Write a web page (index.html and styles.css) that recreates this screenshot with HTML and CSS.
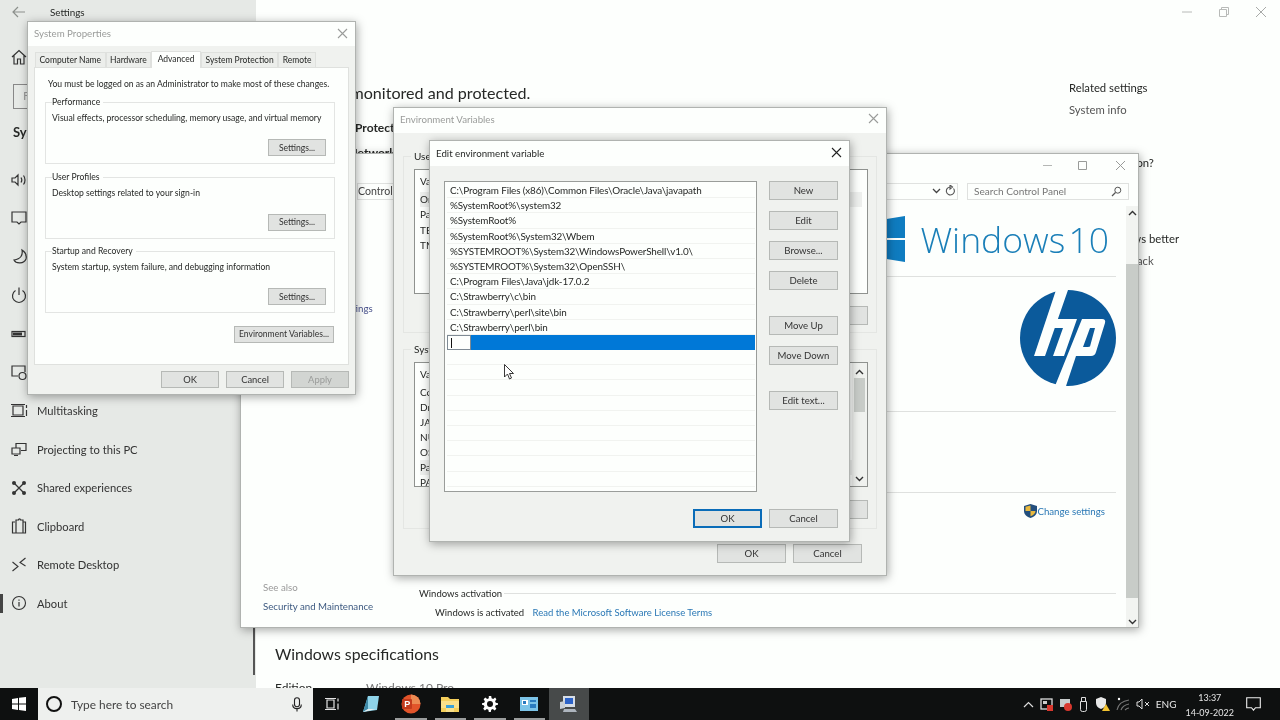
FILE: index.html
```html
<!DOCTYPE html>
<html lang="en">
<head>
  <meta charset="UTF-8">
  <title>Edit environment variable</title>
  <link rel="stylesheet" href="styles.css">
</head>
<body>
<div class="screen">

  <!-- settings app behind everything -->
  <div class="settings">
    <div class="sidebar">
      <div class="side-head">
        <svg class="back" width="14" height="12" viewBox="0 0 14 12"><path d="M6 1 1 6l5 5M1 6h12" fill="none" stroke="#8c908c" stroke-width="1.2"/></svg>
        <span>Settings</span>
      </div>
      <div class="nav-item home">
        <svg class="ico" viewBox="0 0 18 18"><path d="M2 9 9 2.500 16 9M4 7.500V16h3.500v-5h3v5H14V7.500" fill="none" stroke="#333" stroke-width="1.2"/></svg>
      </div>
      <div class="find">F</div>
      <div class="side-title">System</div>
      <div class="nav-list">
        <div class="nav-item"><svg class="ico" viewBox="0 0 18 18"><path d="M2 7h3l3-3v10l-3-3H2zM11 6.500c1 1.500 1 3.500 0 5M13.500 4.500c2 2.500 2 6.500 0 9" fill="none" stroke="#333" stroke-width="1.2"/></svg>Sound</div>
        <div class="nav-item"><svg class="ico" viewBox="0 0 18 18"><path d="M2 3h14v10h-5l-2 2-2-2H2z" fill="none" stroke="#333" stroke-width="1.2"/></svg>Notifications</div>
        <div class="nav-item"><svg class="ico" viewBox="0 0 18 18"><path d="M12 2c1 5-1 9-8 10 2 4 10 4 12-1 1-4-1-7-4-9z" fill="none" stroke="#333" stroke-width="1.2"/></svg>Focus assist</div>
        <div class="nav-item"><svg class="ico" viewBox="0 0 18 18"><path d="M5.500 4.500a6.500 6.500 0 1 0 7 0M9 1.500V9" fill="none" stroke="#333" stroke-width="1.2"/></svg>Power</div>
        <div class="nav-item"><svg class="ico" viewBox="0 0 18 18"><rect x="2" y="6.500" width="13" height="5" fill="none" stroke="#333" stroke-width="1.2"/><rect x="3" y="7.500" width="9" height="3" fill="#333"/></svg>Battery</div>
        <div class="nav-item"><svg class="ico" viewBox="0 0 18 18"><path d="M8 13H2V3h13v6" fill="none" stroke="#333" stroke-width="1.2"/><circle cx="12.500" cy="13" r="3.500" fill="none" stroke="#333" stroke-width="1.200"/></svg>Tablet</div>
        <div class="nav-item"><svg class="ico" viewBox="0 0 18 18"><path d="M3 4h10v9H3zM1 2.500h14M1 14.500h14M16.500 3v3M16.500 8v6" fill="none" stroke="#333" stroke-width="1.2"/></svg>Multitasking</div>
        <div class="nav-item"><svg class="ico" viewBox="0 0 18 18"><path d="M6 8V3.500h10v7h-5M2 8h8v6H2zM4 15.500h4" fill="none" stroke="#333" stroke-width="1.2"/></svg>Projecting to this PC</div>
        <div class="nav-item"><svg class="ico" viewBox="0 0 18 18"><path d="M5 5l8 8M13 5l-8 8" stroke="#333" stroke-width="1.3"/><circle cx="4" cy="4" r="2" fill="#333"/><circle cx="14" cy="4" r="2" fill="#333"/><circle cx="4" cy="14" r="2" fill="#333"/><circle cx="14" cy="14" r="2" fill="#333"/></svg>Shared experiences</div>
        <div class="nav-item"><svg class="ico" viewBox="0 0 18 18"><path d="M5 5H2.500v11h13V5H13M6 16V3h2.500c0-1.500 2-1.500 2 0H13v13" fill="none" stroke="#333" stroke-width="1.2"/></svg>Clipboard</div>
        <div class="nav-item"><svg class="ico" viewBox="0 0 18 18"><path d="M2.500 6 8 10.500 2.500 15M15.500 2 10 6.500 15.500 10" fill="none" stroke="#333" stroke-width="1.100"/></svg>Remote Desktop</div>
        <div class="nav-item current"><svg class="ico" viewBox="0 0 18 18"><circle cx="9" cy="9" r="6.500" fill="none" stroke="#333" stroke-width="1.100"/><path d="M9 8v4.500M9 5.500v1.200" stroke="#333" stroke-width="1.200"/></svg>About</div>
      </div>
      <div class="side-scroll"></div>
    </div>

    <div class="content">
      <p class="status">Your PC is monitored and protected.</p>
      <p class="feature">Virus &amp; Threat Protection</p>
      <p class="feature network">Firewall and Network</p>
      <h2 class="specs">Windows specifications</h2>
      <div class="spec-row"><span class="spec-key">Edition</span><span class="spec-val">Windows 10 Pro</span></div>
    </div>

    <div class="related">
      <p class="rel-head">Related settings</p>
      <p class="rel-link">System info</p>
      <p class="rel-head rel-q">Have a question?</p>
      <p class="rel-head rel-better">Make Windows better</p>
      <p class="rel-link rel-give">Give us feedback</p>
    </div>
    <div class="app-controls">
      <svg width="10" height="10" viewBox="0 0 10 10"><path d="M0 5h10" stroke="#b8bab8"/></svg>
      <svg width="10" height="10" viewBox="0 0 10 10"><path d="M.5 2.500h7v7h-7zM2.500 2.500v-2h7v7h-2" fill="none" stroke="#b8bab8"/></svg>
      <svg width="10" height="10" viewBox="0 0 10 10"><path d="m0 0 10 10M10 0 0 10" stroke="#a8aaa8"/></svg>
    </div>
  </div>

  <!-- control panel: system -->
  <div class="window control-panel">
    <div class="cp-head">
      <svg width="11" height="11" viewBox="0 0 11 11"><path d="M1 5.500h9" stroke="#b5b7b5"/></svg>
      <svg width="11" height="11" viewBox="0 0 11 11"><path d="M1.500 1.500h8v8h-8z" fill="none" stroke="#999b99"/></svg>
      <svg width="11" height="11" viewBox="0 0 11 11"><path d="m1 1 9 9M10 1l-9 9" stroke="#999b99"/></svg>
    </div>
    <div class="cp-address">
      <div class="address">
        <span class="crumb">Control Panel</span>
        <svg class="addr-chev" width="9" height="6" viewBox="0 0 9 6"><path d="m1 1 3.500 3.500L8 1" fill="none" stroke="#444" stroke-width="1.300"/></svg>
        <svg class="addr-refresh" width="12" height="12" viewBox="0 0 12 12"><path d="M9.500 3.500a4 4 0 1 1-3-1.500M6 0v4l2.500-2z" fill="none" stroke="#555" stroke-width="1.100"/></svg>
      </div>
      <div class="cp-search">
        <span>Search Control Panel</span>
        <svg width="11" height="11" viewBox="0 0 11 11"><circle cx="6.800" cy="4.200" r="3" fill="none" stroke="#555"/><path d="M4.500 6.500 1 10" stroke="#555" stroke-width="1.300"/></svg>
      </div>
    </div>
    <div class="cp-body">
      <div class="cp-nav">
        <a class="cp-link">Advanced system settings</a>
        <p class="see-also">See also</p>
        <a class="cp-sec">Security and Maintenance</a>
      </div>
      <div class="cp-main">
        <div class="brand">
          <svg class="win-flag" width="45" height="46" viewBox="0 0 45 46"><path d="M0 7 19 4v18H0zM21 3.700 44 0v22H21zM0 24h19v18L0 39zM21 24h23v22l-23-3.700z" fill="#0f7cc0"/></svg>
          <span class="win-word">Windows 10</span>
        </div>
        <div class="oem">
          <svg width="96" height="96" viewBox="0 0 96 96">
            <circle cx="48" cy="48" r="48" fill="#0b5a9b"/>
            <path d="M36 0h12L25 66H14zM31 29h26L44 66H33l10-28H28z" fill="#fdfffd"/>
            <path fill-rule="evenodd" d="M62 29h20q4 0 3 4L76 62q-1 4-5 4H56L46 96H35zM70 38 63 57h5l2-.5L75 38z" fill="#fdfffd"/>
          </svg>
        </div>
        <div class="cp-sec-blank"></div>
        <div class="computer">
          <svg width="13" height="14" viewBox="0 0 13 14"><path d="M6.500 0 13 2v5c0 3.500-3 6-6.500 7C3 13 0 10.500 0 7V2z" fill="#234f7d"/><path d="M6.500 1.500V7H1.500V2.800zM6.500 7h5c0 2.500-2.500 4.500-5 5.300z" fill="#e9b93f"/></svg>
          <a>Change settings</a>
        </div>
        <div class="activation">
          <div class="act-title"><span>Windows activation</span></div>
          <p class="act-line">Windows is activated <a>Read the Microsoft Software License Terms</a></p>
        </div>
      </div>
      <div class="cp-scroll">
        <svg width="9" height="6" viewBox="0 0 9 6"><path d="m1 5 3.500-3.500L8 5" fill="none" stroke="#333" stroke-width="1.400"/></svg>
        <div class="cp-thumb"></div>
        <svg width="9" height="6" viewBox="0 0 9 6"><path d="m1 1 3.500 3.500L8 1" fill="none" stroke="#333" stroke-width="1.400"/></svg>
      </div>
    </div>
  </div>

  <!-- system properties -->
  <div class="window sys-props">
    <div class="title-bar faded">
      <span>System Properties</span>
      <svg width="11" height="11" viewBox="0 0 11 11"><path d="m1 1 9 9M10 1l-9 9" stroke="#9a9c9a" stroke-width="1.100"/></svg>
    </div>
    <div class="sp-body">
      <div class="tabs">
        <span class="tab">Computer Name</span>
        <span class="tab">Hardware</span>
        <span class="tab active">Advanced</span>
        <span class="tab">System Protection</span>
        <span class="tab">Remote</span>
      </div>
      <div class="tab-panel">
        <p class="admin-note">You must be logged on as an Administrator to make most of these changes.</p>
        <div class="group">
          <span class="group-label">Performance</span>
          <p>Visual effects, processor scheduling, memory usage, and virtual memory</p>
          <button class="btn">Settings...</button>
        </div>
        <div class="group">
          <span class="group-label">User Profiles</span>
          <p>Desktop settings related to your sign-in</p>
          <button class="btn">Settings...</button>
        </div>
        <div class="group">
          <span class="group-label">Startup and Recovery</span>
          <p>System startup, system failure, and debugging information</p>
          <button class="btn">Settings...</button>
        </div>
        <button class="btn env-btn">Environment Variables...</button>
      </div>
      <div class="sp-actions">
        <button class="btn">OK</button>
        <button class="btn">Cancel</button>
        <button class="btn disabled">Apply</button>
      </div>
    </div>
  </div>

  <!-- environment variables -->
  <div class="window env-vars">
    <div class="title-bar faded">
      <span>Environment Variables</span>
      <svg width="11" height="11" viewBox="0 0 11 11"><path d="m1 1 9 9M10 1l-9 9" stroke="#9a9c9a" stroke-width="1.100"/></svg>
    </div>
    <div class="ev-body">
      <div class="ev-group user">
        <span class="ev-label">User variables</span>
        <div class="ev-list">
          <span class="ev-head">Variable</span>
          <span class="picked">OneDrive</span>
          <span>Path</span>
          <span>TEMP</span>
          <span>TMP</span>
        </div>
        <div class="ev-btn-row"><button class="btn ev-btn"></button></div>
      </div>
      <div class="ev-group system">
        <span class="ev-label">System variables</span>
        <div class="ev-list">
          <span class="ev-head">Variable</span>
          <span>ComSpec</span>
          <span>DriverData</span>
          <span>JAVA_HOME</span>
          <span>NUMBER_OF_PROCESSORS</span>
          <span>OS</span>
          <span class="picked">Path</span>
          <span>PATHEXT</span>
          <div class="ev-scroll">
            <svg width="9" height="6" viewBox="0 0 9 6"><path d="m1 5 3.500-3.500L8 5" fill="none" stroke="#333" stroke-width="1.400"/></svg>
            <div class="ev-thumb"></div>
            <svg width="9" height="6" viewBox="0 0 9 6"><path d="m1 1 3.500 3.500L8 1" fill="none" stroke="#333" stroke-width="1.400"/></svg>
          </div>
        </div>
        <div class="ev-btn-row"><button class="btn ev-btn"></button></div>
      </div>
      <div class="ev-actions">
        <button class="btn big">OK</button>
        <button class="btn big">Cancel</button>
      </div>
    </div>
  </div>

  <!-- edit dialog on top -->
  <div class="window edit-var">
    <div class="title-bar">
      <span>Edit environment variable</span>
      <svg width="11" height="11" viewBox="0 0 11 11"><path d="m1 1 9 9M10 1l-9 9" stroke="#222" stroke-width="1.100"/></svg>
    </div>
    <div class="ed-body">
      <div class="ed-main">
        <div class="path-list">
          <div class="path-row">C:\Program Files (x86)\Common Files\Oracle\Java\javapath</div>
          <div class="path-row">%SystemRoot%\system32</div>
          <div class="path-row">%SystemRoot%</div>
          <div class="path-row">%SystemRoot%\System32\Wbem</div>
          <div class="path-row">%SYSTEMROOT%\System32\WindowsPowerShell\v1.0\</div>
          <div class="path-row">%SYSTEMROOT%\System32\OpenSSH\</div>
          <div class="path-row">C:\Program Files\Java\jdk-17.0.2</div>
          <div class="path-row">C:\Strawberry\c\bin</div>
          <div class="path-row">C:\Strawberry\perl\site\bin</div>
          <div class="path-row">C:\Strawberry\perl\bin</div>
          <div class="path-row editing"><span class="edit-box"><i></i></span></div>
          <div class="path-row"></div>
          <div class="path-row"></div>
          <div class="path-row"></div>
          <div class="path-row"></div>
          <div class="path-row"></div>
          <div class="path-row"></div>
          <div class="path-row"></div>
          <div class="path-row"></div>
          <div class="path-row"></div>
        </div>
        <div class="ed-side">
          <button class="btn big">New</button>
          <button class="btn big">Edit</button>
          <button class="btn big">Browse...</button>
          <button class="btn big">Delete</button>
          <button class="btn big sep">Move Up</button>
          <button class="btn big">Move Down</button>
          <button class="btn big sep2">Edit text...</button>
        </div>
      </div>
      <div class="ed-actions">
        <button class="btn big primary">OK</button>
        <button class="btn big">Cancel</button>
      </div>
    </div>
  </div>

  <svg class="cursor" width="10" height="16" viewBox="0 0 10 16"><path d="M.5.500v12.500l3-3 2 5 2-1-2-4.500h4z" fill="#fff" stroke="#222" stroke-width=".9"/></svg>

  <!-- taskbar -->
  <div class="taskbar">
    <div class="start">
      <svg width="14" height="14" viewBox="0 0 14 14"><path d="M0 2 6 1v5.500H0zM7 .800 14 0v6.500H7zM0 7.500h6V13l-6-1zM7 7.500h7V14l-7-.9z" fill="#fff"/></svg>
    </div>
    <div class="search">
      <span class="cortana"></span>
      <span class="search-text">Type here to search</span>
      <svg width="10" height="15" viewBox="0 0 10 15"><rect x="2.500" y=".7" width="5" height="9" rx="2.500" fill="none" stroke="#222" stroke-width="1.100"/><path d="M.7 7.500C.7 13 9.300 13 9.300 7.500M5 11.500v3" fill="none" stroke="#222" stroke-width="1.100"/></svg>
    </div>
    <div class="apps">
      <div class="app"><svg width="14" height="14" viewBox="0 0 14 14"><path d="M2 3h7v8H2zM0 1.500h11M0 12.500h11M13 1.500v3M13 6.500v6" fill="none" stroke="#e4e4e4" stroke-width="1.200"/></svg></div>
      <div class="app"><svg width="18" height="18" viewBox="0 0 18 18"><path d="M6 1h11l-2 14-14 2z" fill="#8fd3e8"/><path d="M6 1 1 17l5-3z" fill="#3f8aa8"/><path d="M6 14h8l-13 3z" fill="#e8eef0"/></svg></div>
      <div class="app open"><svg width="20" height="20" viewBox="0 0 20 20"><circle cx="10" cy="10" r="9.500" fill="#e2542a"/><path d="M10 .5a9.500 9.500 0 0 1 9.500 9.500H10z" fill="#ec8a52"/><rect x="1" y="5" width="10" height="10" rx="1" fill="#c33a1c"/><text x="3.300" y="13" class="ppt-p">P</text></svg></div>
      <div class="app open"><svg width="18" height="16" viewBox="0 0 18 16"><path d="M0 1h7l2 2h9v4H0z" fill="#f5cf5c"/><path d="M0 5h18v11H0z" fill="#fbe08a"/><path d="M5 9h8v3H5z" fill="#3aa0d8"/><path d="M0 12h5v4H0zM13 12h5v4h-5z" fill="#f5cf5c"/></svg></div>
      <div class="app open"><svg width="16" height="16" viewBox="0 0 16 16"><path d="M6.800 0h2.400l.4 2.200 1.600.7 1.900-1.300L14.400 3.300l-1.300 1.900.7 1.600 2.200.4v1.600l-2.200.4-.7 1.600 1.300 1.900-1.700 1.700-1.900-1.300-1.600.7-.4 2.200H6.800l-.4-2.200-1.600-.7-1.900 1.300-1.700-1.700 1.300-1.900-.7-1.600L0 8.800V7.200l2.200-.4.7-1.600-1.300-1.900L3.300 1.600l1.900 1.300 1.600-.7z" fill="#fff"/><circle cx="8" cy="8" r="3" fill="#111"/></svg></div>
      <div class="app open"><svg width="18" height="14" viewBox="0 0 18 14"><rect width="18" height="14" fill="#7cc4e8"/><rect x="2" y="3" width="6" height="5" fill="#fff"/><rect x="3" y="4" width="3" height="3" fill="#2a7bc0"/><path d="M10 3h6v2h-6zM10 7h6v4h-6z" fill="#2a7bc0"/></svg></div>
      <div class="app current"><svg width="20" height="20" viewBox="0 0 20 20"><path d="M4 2h12v11H4z" fill="#d6dde6"/><path d="M6 4h8v6H6z" fill="#2d63c8"/><path d="M1 8l5-1v7l-5 1z" fill="#c8ced6"/><path d="M5 15h11l2 3H4z" fill="#aeb5be"/></svg></div>
    </div>
    <div class="tray">
      <svg width="11" height="7" viewBox="0 0 11 7"><path d="M1 6 5.500 1.500 10 6" fill="none" stroke="#ddd" stroke-width="1.200"/></svg>
      <svg width="13" height="13" viewBox="0 0 13 13"><rect x="1" y="1" width="11" height="10" fill="none" stroke="#ddd" stroke-width="1.300"/><rect x="3" y="3" width="4" height="3" fill="#ccc"/><rect x="7" y="7" width="6" height="6" fill="#d8382e"/></svg>
      <svg width="14" height="13" viewBox="0 0 14 13"><path d="M1 1h10v8H1z" fill="#c8cccc"/><circle cx="9" cy="9" r="4" fill="#d8382e"/></svg>
      <svg width="11" height="15" viewBox="0 0 11 15"><path d="M2.500.5h4v4h-4zM1.500 4.500h6v8a2 2 0 0 1-2 2h-2a2 2 0 0 1-2-2z" fill="none" stroke="#ddd"/></svg>
      <svg width="14" height="14" viewBox="0 0 14 14"><path d="M5 0 10 2v4c0 3-2 5-5 6-3-1-5-3-5-6V2z" fill="#e8e8e8"/><path d="M10 7l4 7H6z" fill="#f2c230"/></svg>
      <svg width="14" height="14" viewBox="0 0 14 14"><circle cx="3" cy="2" r="1.200" fill="#fff"/><path d="M1 13C2 8 6 4 13 3M5 13c1-3 3-5 8-6M9 13c1-1 2-2 4-2" fill="none" stroke="#777" stroke-width="1.100"/></svg>
      <svg width="14" height="12" viewBox="0 0 14 12"><path d="M1 4h2l3-3v10L3 8H1zM9 4l4 4M13 4 9 8" fill="none" stroke="#ddd"/></svg>
      <span class="lang">ENG</span>
      <div class="clock"><span>13:37</span><span>14-09-2022</span></div>
      <svg class="notif" width="15" height="14" viewBox="0 0 15 14"><path d="M.7.7h13.600v10H9.500l-2 2.500-2-2.500H.7z" fill="none" stroke="#eee" stroke-width="1.100"/></svg>
    </div>
  </div>
</div>
</body>
</html>
```

FILE: styles.css
```css
* {
  box-sizing: border-box;
}

body {
  margin: 0;
  background: #fdfffd;
  font-family: Lato, Roboto, sans-serif;
  color: #262826;
}

p {
  margin: 0;
}

a {
  color: #2a78b5;
}

.screen {
  position: relative;
  width: 1280px;
  height: 720px;
  overflow: hidden;
  filter: blur(0.4px);
}

/* settings app */
.settings {
  display: flex;
  height: 688px;
  overflow: hidden;
  background: #fdfffd;
}

.sidebar {
  position: relative;
  width: 256px;
  flex: none;
  background: #e6e9e6;
}

.side-head {
  display: flex;
  align-items: center;
  height: 24px;
  padding-left: 12px;
  font-size: 9.9px;
}

.side-head span {
  margin-left: 24px;
}

.nav-item {
  display: flex;
  align-items: center;
  height: 38.5px;
  padding-left: 10px;
  font-size: 11.2px;
  color: #333;
}

.nav-item.home {
  margin-top: 14px;
}

.ico {
  width: 18px;
  height: 18px;
  margin-right: 9px;
  flex: none;
}

.nav-item.current {
  box-shadow: inset 3px 0 0 #444;
  height: 19px;
  margin: 9.75px 0;
}

.find {
  width: 120px;
  height: 25px;
  margin: 7px 0 0 13px;
  padding: 3px 0 0 9px;
  border: 1.5px solid #888;
  font-size: 12px;
  color: #999;
}

.side-title {
  margin: 15px 0 17px 13px;
  height: 20px;
  font-size: 13px;
  font-weight: 700;
}

.side-scroll {
  position: absolute;
  top: 395px;
  right: 1px;
  width: 2px;
  height: 280px;
  background: #555;
}

.content {
  width: 813px;
  flex: none;
  padding: 84px 0 0 19px;
}

.status {
  height: 18px;
  font-size: 16.1px;
  line-height: 18px;
  margin-bottom: 18px;
  white-space: nowrap;
}

.feature {
  height: 16px;
  margin-bottom: 9px;
  font-size: 12px;
  font-weight: 700;
  line-height: 16px;
  white-space: nowrap;
}

.feature.network {
  padding-left: 6px;
}

.specs {
  margin: 483px 0 17px;
  height: 20px;
  font-size: 15.8px;
  font-weight: 400;
  line-height: 20px;
}

.spec-row {
  display: flex;
  font-size: 12px;
  line-height: 14px;
}

.spec-key {
  width: 91px;
}

.spec-val {
  color: #777;
}

.related {
  padding-top: 80px;
  font-size: 11.3px;
}

.rel-head {
  height: 16px;
  line-height: 16px;
}

.rel-link {
  margin-top: 6px;
  height: 16px;
  line-height: 16px;
  color: #555;
}

.rel-q {
  margin-top: 37px;
}

.rel-better {
  margin-top: 60px;
}

.rel-give {
  margin-top: 6px;
}

.app-controls {
  position: absolute;
  top: 7px;
  right: 14px;
  display: flex;
  gap: 27px;
}

/* windows sit on a free desktop */
.window {
  position: absolute;
  border: 1px solid #b0b3b0;
  box-shadow: 1px 2px 9px rgba(0, 0, 0, 0.35);
  background: #f0f2ef;
}

.title-bar {
  display: flex;
  align-items: center;
  justify-content: space-between;
  height: 25px;
  padding: 0 7px 2px 6px;
  background: #fdfffd;
  font-size: 9.7px;
}

.title-bar.faded {
  color: #9a9c9a;
}

.env-vars .title-bar {
  padding-bottom: 4px;
}

.btn {
  display: block;
  height: 19px;
  padding: 0;
  border: 1px solid #b6b9b6;
  background: #e1e3e1;
  font-family: inherit;
  font-size: 9.6px;
  color: #333;
  white-space: nowrap;
}

.btn.big {
  width: 69px;
}

/* control panel */
.control-panel {
  left: 240px;
  top: 153px;
  width: 899px;
  height: 475px;
  background: #fdfffd;
}

.cp-head {
  display: flex;
  justify-content: flex-end;
  align-items: center;
  gap: 24px;
  height: 23px;
  padding-right: 12px;
}

.cp-head svg:last-child {
  margin-left: 3px;
}

.cp-address {
  display: flex;
  align-items: center;
  gap: 9px;
  height: 29px;
  padding-top: 1px;
  padding-bottom: 2px;
}

.address {
  display: flex;
  align-items: center;
  margin-left: 116px;
  width: 601px;
  height: 17px;
  padding-right: 1px;
  border: 1px solid #e0e2e0;
  font-size: 10.6px;
}

.crumb {
  margin-right: auto;
  color: #444;
}

.addr-chev {
  margin-right: 3px;
}

.cp-search {
  display: flex;
  align-items: center;
  justify-content: space-between;
  width: 162px;
  height: 17px;
  padding: 0 6px;
  border: 1px solid #dfe1df;
  font-size: 10.1px;
  color: #777;
}

.cp-body {
  display: flex;
  height: 421px;
}

.cp-nav {
  display: flex;
  flex-direction: column;
  width: 178px;
  flex: none;
  padding: 96px 0 15px 22px;
  font-size: 9.7px;
  white-space: nowrap;
}

.cp-link {
  color: #47508a;
}

.see-also {
  margin-top: auto;
  margin-bottom: 7px;
  color: #999;
}

.cp-sec {
  color: #3d5a80;
}

.cp-main {
  width: 697px;
  flex: none;
}

.brand {
  display: flex;
  justify-content: flex-end;
  align-items: center;
  height: 71px;
  padding: 10px 7px 15px 0;
  border-bottom: 1px solid #dfe1df;
}

.win-flag {
  margin-right: 14px;
}

.win-word {
  font-family: "Open Sans", sans-serif;
  font-size: 35.5px;
  font-weight: 300;
  word-spacing: -6px;
  color: #1a7fb8;
  line-height: 46px;
  white-space: nowrap;
}

.oem {
  display: flex;
  justify-content: flex-end;
  height: 135px;
  padding-top: 13px;
  border-bottom: 1px solid #dfe1df;
}

.cp-sec-blank {
  height: 81px;
  border-bottom: 1px solid #dfe1df;
}

.computer {
  display: flex;
  align-items: center;
  justify-content: flex-end;
  gap: 0;
  height: 101px;
  padding: 0 11px 64px 0;
  border-bottom: 1px solid #dfe1df;
  font-size: 9.7px;
}

.activation {
  margin-top: -8px;
}

.act-title {
  height: 16px;
  font-size: 9.5px;
  line-height: 16px;
}

.act-title span {
  padding-right: 2px;
  background: #fdfffd;
}

.act-line {
  margin-top: 4px;
  padding-left: 16px;
  font-size: 9.5px;
  line-height: 14px;
}

.act-line a {
  margin-left: 6px;
}

.cp-scroll {
  display: flex;
  flex-direction: column;
  align-items: center;
  width: 12px;
  margin-left: 10px;
  padding-top: 4px;
  background: #f2f4f1;
}

.cp-thumb {
  width: 12px;
  height: 334px;
  margin: 48px 0 21px;
  background: #c8ccc8;
}

/* system properties */
.sys-props {
  left: 27px;
  top: 21px;
  width: 329px;
  height: 374px;
}

.sys-props .title-bar {
  height: 24px;
}

.sp-body {
  padding: 6px 6px 0;
}

.tabs {
  display: flex;
  align-items: flex-end;
  height: 15px;
  padding-left: 1px;
}

.tab {
  height: 15px;
  padding: 0 3.5px;
  background: #eceeeb;
  border: 1px solid #dfe1de;
  border-bottom: 0;
  font-size: 8.5px;
  line-height: 15px;
  white-space: nowrap;
}

.tab.active {
  position: relative;
  height: 17px;
  margin-bottom: -1px;
  padding: 0 5.5px;
  background: #fdfffd;
}

.tab-panel {
  display: flex;
  flex-direction: column;
  height: 298px;
  padding: 9px 13px 0 10px;
  background: #fdfffd;
  border: 1px solid #dfe1de;
  font-size: 8.6px;
}

.admin-note {
  height: 14px;
  margin: 0 0 11px 3px;
  white-space: nowrap;
  line-height: 14px;
}

.group {
  display: flex;
  flex-direction: column;
  height: 62px;
  margin-bottom: 12.5px;
  padding: 3px 8px 0 6px;
  border: 1px solid #e3e5e3;
  line-height: 14px;
  white-space: nowrap;
}

.group-label {
  align-self: flex-start;
  margin: -11px 0 2px 0;
  padding-right: 3px;
  background: #fdfffd;
}

.group .btn {
  align-self: flex-end;
  width: 58px;
  height: 17px;
  margin-top: 14px;
  font-size: 8.6px;
}

.env-btn {
  align-self: flex-end;
  width: 100px;
  height: 17px;
  font-size: 8.6px;
  margin-right: 1px;
}

.sp-actions {
  display: flex;
  justify-content: flex-end;
  gap: 7px;
  padding-top: 6px;
}

.sp-actions .btn {
  width: 58px;
  height: 17px;
  font-size: 9.4px;
}

.btn.disabled {
  background: #d2d5d2;
  color: #9a9c9a;
}

/* environment variables */
.env-vars {
  left: 393px;
  top: 107px;
  width: 494px;
  height: 469px;
}

.ev-body {
  padding: 23px 9px 0;
  font-size: 10px;
}

.ev-group {
  display: flex;
  flex-direction: column;
  border: 1px solid #e4e6e3;
  padding: 0 8px 0 10px;
}

.ev-group.user {
  height: 177px;
  margin-bottom: 16px;
}

.ev-group.system {
  height: 180px;
}

.ev-label {
  align-self: flex-start;
  margin: -8px 0 6px -3px;
  padding: 0 3px;
  height: 14px;
  line-height: 14px;
  background: #f0f2ef;
}

.ev-list {
  position: relative;
  display: flex;
  flex-direction: column;
  height: 125px;
  padding: 4px 5px;
  background: #fdfffd;
  border: 1px solid #8f928f;
}

.ev-list span {
  height: 15.2px;
  line-height: 15px;
  white-space: nowrap;
}

.ev-head {
  margin-bottom: 3px;
}

.picked {
  background: #eef0ee;
}

.ev-scroll {
  position: absolute;
  top: 0;
  right: 0;
  bottom: 0;
  display: flex;
  flex-direction: column;
  align-items: center;
  width: 15px;
  padding: 6px 0 4px;
  background: #f0f2ef;
}

.ev-thumb {
  width: 11px;
  height: 34px;
  margin: 3px 0 auto;
  background: #c8ccc8;
}

.ev-btn-row {
  display: flex;
  justify-content: flex-end;
  padding-top: 12px;
}

.system .ev-btn-row {
  padding-top: 13px;
}

.ev-btn {
  width: 69px;
}

.ev-actions {
  display: flex;
  justify-content: flex-end;
  gap: 7px;
  padding: 15px 15px 0 0;
}

/* edit dialog */
.edit-var {
  left: 429px;
  top: 140px;
  width: 421px;
  height: 402px;
}

.ed-body {
  padding: 15px 11px 0 14px;
}

.ed-main {
  display: flex;
  gap: 12px;
}

.path-list {
  width: 313px;
  height: 311px;
  padding: 1px 1px 0 2px;
  overflow: hidden;
  background: #fdfffd;
  border: 1px solid #9a9d9a;
  font-size: 9.9px;
  letter-spacing: -0.12px;
}

.path-row {
  height: 15.2px;
  padding-left: 3px;
  line-height: 15px;
  white-space: nowrap;
  border-bottom: 1px solid #f1f3f0;
}

.path-row.editing {
  padding-left: 0;
  background: #0078d7;
  border: 0;
}

.edit-box {
  display: block;
  width: 24px;
  height: 15px;
  padding: 2px 0 0 3px;
  background: #fdfffd;
  border: 1px solid #7e8a94;
}

.edit-box i {
  display: block;
  width: 1px;
  height: 10px;
  background: #111;
}

.ed-side {
  display: flex;
  flex-direction: column;
  margin-top: -0.5px;
}

.ed-side .btn {
  margin-bottom: 11px;
}

.ed-side .sep {
  margin-top: 15px;
}

.ed-side .sep2 {
  margin-top: 15px;
}

.ed-actions {
  display: flex;
  justify-content: flex-end;
  gap: 7px;
  padding-top: 17px;
}

.btn.primary {
  border: 2px solid #0a6cb8;
}

.cursor {
  position: absolute;
  left: 504px;
  top: 364px;
}

/* taskbar */
.taskbar {
  position: relative;
  display: flex;
  height: 32px;
  background: #0e1010;
}

.start {
  display: flex;
  align-items: center;
  justify-content: center;
  width: 38px;
}

.search {
  display: flex;
  align-items: center;
  width: 275px;
  padding: 0 11px 0 8px;
  background: #eef0ee;
  font-size: 11.9px;
  color: #444;
}

.cortana {
  width: 16px;
  height: 16px;
  margin-right: 9px;
  border: 2px solid #111;
  border-radius: 50%;
}

.search-text {
  flex: 1;
}

.apps {
  display: flex;
  margin-left: -1px;
}

.app {
  position: relative;
  display: flex;
  align-items: center;
  justify-content: center;
  width: 39.5px;
}

.app.open::after {
  content: "";
  position: absolute;
  left: 4px;
  right: 4px;
  bottom: 0;
  height: 2px;
  background: #9a9c9c;
}

.app.current {
  background: #474a4a;
}

.ppt-p {
  font-family: "Liberation Sans", sans-serif;
  font-size: 9px;
  font-weight: 700;
  fill: #fff;
}

.tray {
  display: flex;
  align-items: center;
  gap: 6px;
  margin-left: auto;
  padding-right: 19px;
  color: #e6e6e6;
}

.lang {
  margin: 0 3px 0 0;
  font-size: 10px;
}

.clock {
  display: flex;
  flex-direction: column;
  align-items: center;
  margin-right: 6px;
  padding-top: 1px;
  font-size: 9px;
  line-height: 15px;
}
```
